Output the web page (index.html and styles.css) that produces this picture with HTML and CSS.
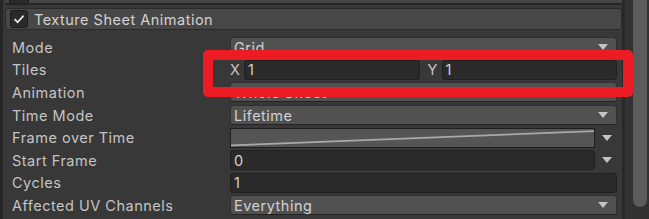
FILE: index.html
```html
<!DOCTYPE html>
<html lang="en">
<head>
    <meta charset="UTF-8">
    <title>Texture Sheet Animation</title>
    <link rel="stylesheet" href="styles.css">
</head>
<body>
    <div class="inspector">
        <div class="panel">
            <div class="prev-header">
                <span class="prev-check"></span>
            </div>

            <div class="module-header">
                <span class="checkbox">
                    <svg width="12" height="10" viewBox="0 0 12 10">
                        <path d="M1.5 5.2 L4.6 8.2 L10.6 1.6" fill="none" stroke="#e6e6e6" stroke-width="1.7"/>
                    </svg>
                </span>
                <span class="module-title">Texture Sheet Animation</span>
            </div>

            <div class="rows">
                <div class="row">
                    <div class="label">Mode</div>
                    <div class="dropdown"><span class="value">Grid</span><span class="arrow"></span></div>
                </div>
                <div class="row">
                    <div class="label">Tiles</div>
                    <div class="vector">
                        <div class="axis"><span class="axis-name">X</span><div class="number">1</div></div>
                        <div class="axis"><span class="axis-name">Y</span><div class="number">1</div></div>
                    </div>
                </div>
                <div class="row">
                    <div class="label">Animation</div>
                    <div class="dropdown"><span class="value">Whole Sheet</span><span class="arrow"></span></div>
                </div>
                <div class="row">
                    <div class="label">Time Mode</div>
                    <div class="dropdown"><span class="value">Lifetime</span><span class="arrow"></span></div>
                </div>
                <div class="row">
                    <div class="label">Frame over Time</div>
                    <div class="with-menu">
                        <div class="curve">
                            <svg width="100%" height="100%" viewBox="0 0 364 17" preserveAspectRatio="none">
                                <path d="M0 15.5 L364 2" fill="none" stroke="#a9a9a9" stroke-width="1.6"/>
                            </svg>
                        </div>
                        <span class="menu-arrow"><span class="arrow"></span></span>
                    </div>
                </div>
                <div class="row">
                    <div class="label">Start Frame</div>
                    <div class="with-menu">
                        <div class="number">0</div>
                        <span class="menu-arrow"><span class="arrow"></span></span>
                    </div>
                </div>
                <div class="row">
                    <div class="label">Cycles</div>
                    <div class="number">1</div>
                </div>
                <div class="row">
                    <div class="label">Affected UV Channels</div>
                    <div class="dropdown"><span class="value">Everything</span><span class="arrow"></span></div>
                </div>
            </div>
        </div>

        <div class="scrollbar">
            <div class="thumb"></div>
        </div>

        <div class="highlight"></div>
    </div>
</body>
</html>
```

FILE: styles.css
```css
body {
    margin: 0;
    background-color: #383838;
    font-family: Inter, 'Noto Sans', sans-serif;
    font-size: 14.5px;
    letter-spacing: 0.5px;
    color: #c4c4c4;
    overflow: hidden;
}

.inspector {
    position: relative;
    display: flex;
    height: 219px;
}

.panel {
    flex: 1;
    border-left: 3px solid #262626;
}

.prev-header {
    height: 3px;
    margin-left: 2px;
    background-color: #464646;
    border-bottom: 2px solid #242424;
    border-radius: 0 0 3px 3px;
    overflow: hidden;
}

.prev-check {
    display: block;
    width: 18px;
    height: 6px;
    margin: -3px 0 0 4px;
    background-color: #2a2a2a;
    border: 1px solid #1c1c1c;
    border-radius: 3px;
}

.module-header {
    display: flex;
    align-items: center;
    height: 20px;
    margin: 3px 0 0 2px;
    padding: 0 4px;
    background-color: #474747;
    border: 1px solid #2b2b2b;
    border-radius: 3px;
}

.checkbox {
    display: flex;
    align-items: center;
    justify-content: center;
    width: 16px;
    height: 16px;
    background-color: #2a2a2a;
    border: 1px solid #1b1b1b;
    border-radius: 3px;
}

.module-title {
    margin-left: 6px;
    color: #d2d2d2;
}

.rows {
    padding: 6px 5px 0 9px;
}

.row {
    display: flex;
    align-items: center;
    height: 22.6px;
}

.label {
    width: 218px;
    flex: none;
    white-space: nowrap;
}

.dropdown, .number, .curve {
    box-sizing: border-box;
    height: 20px;
}

.dropdown {
    flex: 1;
    display: flex;
    align-items: center;
    padding: 0 8px 0 3px;
    background-color: #515151;
    border: 1px solid #303030;
    border-bottom-color: #242424;
    border-radius: 3px;
    color: #d2d2d2;
}

.value {
    flex: 1;
    white-space: nowrap;
}

.arrow {
    width: 0;
    height: 0;
    border-left: 5px solid transparent;
    border-right: 5px solid transparent;
    border-top: 6px solid #c4c4c4;
}

.number {
    flex: 1;
    display: flex;
    align-items: center;
    padding-left: 3px;
    background-color: #2a2a2a;
    border: 1px solid #202020;
    border-radius: 3px;
    color: #d2d2d2;
}

.vector {
    flex: 1;
    display: grid;
    grid-template-columns: 1fr 1fr;
    gap: 8px;
}

.axis {
    display: flex;
    align-items: center;
}

.axis-name {
    width: 14px;
    flex: none;
}

.with-menu {
    flex: 1;
    display: flex;
    align-items: center;
}

.curve {
    flex: 1;
    background-color: #555555;
    border: 1px solid #1e1e1e;
}

.curve svg {
    display: block;
}

.menu-arrow {
    width: 21px;
    display: flex;
    justify-content: center;
    padding-left: 1px;
}

.scrollbar {
    width: 27px;
    flex: none;
    border-left: 3px solid #282828;
    background-color: #323232;
    box-sizing: border-box;
    padding-left: 8px;
}

.thumb {
    width: 14px;
    height: 207px;
    background-color: #5b5b5b;
    border-radius: 0 0 7px 7px;
}

/* annotation drawn over the Tiles row */
.highlight {
    position: absolute;
    left: 203px;
    top: 50px;
    width: 410px;
    height: 27px;
    border: 10px solid #ed1c24;
    border-radius: 5px;
}
```
